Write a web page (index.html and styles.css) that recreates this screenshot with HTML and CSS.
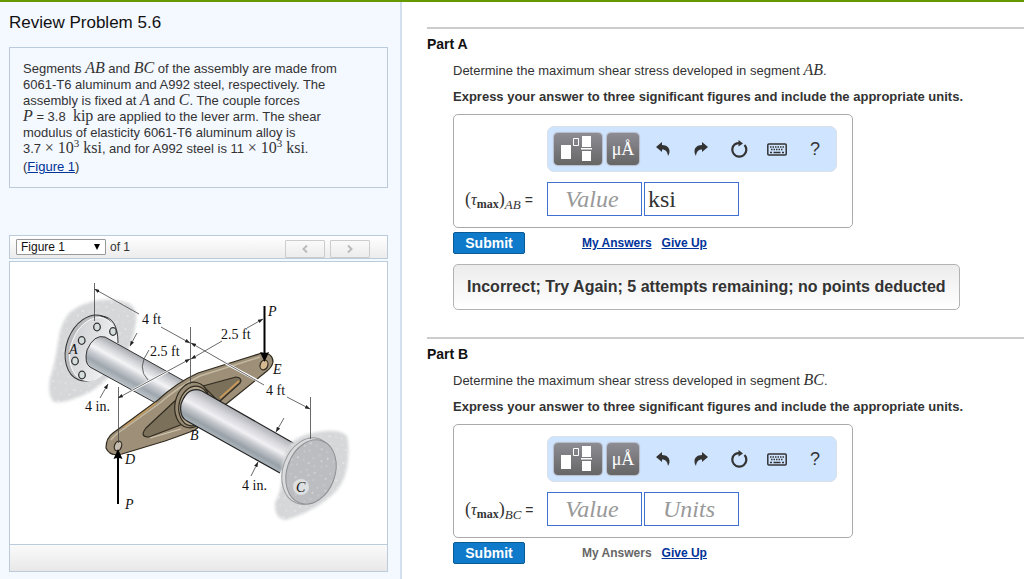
FILE: index.html
```html
<!DOCTYPE html>
<html lang="en">
<head>
<meta charset="utf-8">
<title>Review Problem 5.6</title>
<link rel="stylesheet" href="styles.css">
</head>
<body>
<svg class="defs" aria-hidden="true">
  <symbol id="i-template" viewBox="0 0 48 32">
    <path fill="#fff" d="M7 12h10v14H7zM28 3h9v11h-9zM28 18h9v10h-9zM27 15h11v1.500H27z"/>
    <path fill="none" stroke="#fff" d="M19.500 5.500h5v7h-5z"/>
  </symbol>
  <symbol id="i-undo" viewBox="0 0 14 14"><path d="M0 5 6 0v3c5 0 7.500 3 7.500 6 0 2-.5 3.500-1.500 5C11.500 10 10 7.500 6 7.500V10z"/></symbol>
  <symbol id="i-redo" viewBox="0 0 14 14"><path d="M14 5 8 0v3C3 3 .5 6 .5 9c0 2 .5 3.500 1.500 5C2.500 10 4 7.500 8 7.500V10z"/></symbol>
  <symbol id="i-reset" viewBox="0 0 18 18"><path fill="none" stroke="currentColor" stroke-width="2.200" d="M14.500 5A7 7 0 1 1 5 4.200Q7 3 10 3.200"/><path d="M8.500 0 13 3.500 8.500 6.500z"/></symbol>
  <symbol id="i-keyboard" viewBox="0 0 20 13"><rect x=".8" y="1" width="18.400" height="11" rx="1" fill="none" stroke="currentColor" stroke-width="1.500"/><path fill="none" stroke="currentColor" stroke-width="1.500" stroke-dasharray="1.500 1" d="M3 4h14M4 6.500h12"/><path fill="none" stroke="currentColor" stroke-width="1.500" d="M3 9.500h2M6.500 9.500h7M15 9.500h2"/></symbol>
</svg>
<div class="page">
  <aside class="side">
    <h1 class="title">Review Problem 5.6</h1>
    <div class="problem">
      Segments <i class="m">AB</i> and <i class="m">BC</i> of the assembly are made from 6061-T6 aluminum and A992 steel, respectively. The assembly is fixed at <i class="m">A</i> and <i class="m">C</i>. The couple forces <span class="keep"><i class="m">P</i> = 3.8 &nbsp;<span class="m">kip</span></span> are applied to the lever arm. The shear modulus of elasticity 6061-T6 aluminum alloy is <span class="keep">3.7 <span class="m">× 10<sup>3</sup> ksi</span></span>, and for A992 steel is <span class="keep">11 <span class="m">× 10<sup>3</sup> ksi</span></span>.
      <div class="ref">(<a href="#figure">Figure 1</a>)</div>
    </div>
    <div class="figbar">
      <span class="pick"><select class="figsel" aria-label="Figure"><option>Figure 1</option></select><svg class="caret" width="6" height="6" viewBox="0 0 6 6" aria-hidden="true"><path d="M0 0h6L3 6z"/></svg></span>
      <span class="of">of 1</span>
      <button class="nav" disabled aria-label="Previous figure"><svg width="6" height="8" viewBox="0 0 6 8"><path d="M5 0.500 1.500 4 5 7.500"/></svg></button>
      <button class="nav" disabled aria-label="Next figure"><svg width="6" height="8" viewBox="0 0 6 8"><path d="M1 0.500 4.500 4 1 7.500"/></svg></button>
    </div>
    <figure class="figure" id="figure">
      <svg class="drawing" viewBox="10 262 377 282" role="img" aria-label="Shaft ABC with a lever arm DE">
        <defs>
          <linearGradient id="tubeL" gradientUnits="userSpaceOnUse" x1="134" y1="353" x2="118" y2="382">
            <stop offset="0" stop-color="#a5a8ad"/><stop offset=".2" stop-color="#cfd1d5"/><stop offset=".42" stop-color="#f4f4f6"/><stop offset=".58" stop-color="#cbced3"/><stop offset=".8" stop-color="#9fa7ae"/><stop offset="1" stop-color="#bcc3c9"/>
          </linearGradient>
          <linearGradient id="tubeR" gradientUnits="userSpaceOnUse" x1="250" y1="420" x2="234" y2="449">
            <stop offset="0" stop-color="#b4b6bb"/><stop offset=".2" stop-color="#d6d6db"/><stop offset=".42" stop-color="#f1f0f3"/><stop offset=".58" stop-color="#c6c9ce"/><stop offset=".8" stop-color="#98a1a8"/><stop offset="1" stop-color="#b4bcc2"/>
          </linearGradient>
          <linearGradient id="disc" x1="0" y1="0" x2="1" y2="0"><stop offset="0" stop-color="#d0d2d5"/><stop offset="1" stop-color="#f3f4f5"/></linearGradient>
          <pattern id="specks" width="23" height="19" patternUnits="userSpaceOnUse" patternTransform="rotate(23)">
            <g fill="#fff" opacity=".75"><circle cx="3" cy="4" r=".7"/><circle cx="9" cy="2" r=".5"/><circle cx="14" cy="7" r=".8"/><circle cx="20" cy="5" r=".5"/><circle cx="6" cy="10" r=".5"/><circle cx="11" cy="13" r=".7"/><circle cx="18" cy="13" r=".6"/><circle cx="3" cy="16" r=".6"/><circle cx="15" cy="17" r=".5"/></g>
          </pattern>
          <filter id="soft"><feGaussianBlur stdDeviation="1.500"/></filter>
          <marker id="ar" viewBox="0 0 8 6" refX="8" refY="3" markerWidth="5" markerHeight="4" markerUnits="userSpaceOnUse" orient="auto-start-reverse"><path d="M0 0 8 3 0 6z" fill="#222"/></marker>
        </defs>
        <path filter="url(#soft)" fill="#d6d7d9" d="M69 313Q80 304 94 301Q112 297 128 303Q138 308 136 322Q133 345 122 360Q110 380 90 392Q66 404 54 402Q47 396 50 378Q55 364 58 342Q60 324 69 313z"/>
        <path fill="url(#specks)" d="M69 313Q80 304 94 301Q112 297 128 303Q138 308 136 322Q133 345 122 360Q110 380 90 392Q66 404 54 402Q47 396 50 378Q55 364 58 342Q60 324 69 313z"/>
        <g stroke="#333" stroke-width="1">
          <ellipse cx="90.500" cy="348" rx="24" ry="34" transform="rotate(20 90.500 348)" fill="#b9bbbf"/>
          <ellipse cx="93.500" cy="349" rx="22.500" ry="32.500" transform="rotate(20 93.500 349)" fill="url(#disc)" stroke="#f7f7f7"/>
          <path fill="none" d="M101 316Q118 317 118 343"/>
          <g fill="#d5dedd" stroke-width="1.300"><ellipse cx="97" cy="327" rx="3.300" ry="3.800"/><ellipse cx="113" cy="331.500" rx="3.300" ry="3.800"/><ellipse cx="81.700" cy="340.500" rx="3.300" ry="3.800"/><ellipse cx="75" cy="361" rx="3.300" ry="3.800"/><ellipse cx="82" cy="375" rx="3.300" ry="3.800"/></g>
          <path fill="url(#tubeL)" d="M105 337Q94 334 87 350Q84 363 90 367L172 412 202 391z"/>
        </g>
        <g stroke="#312b20" stroke-width="1.200" stroke-linejoin="round">
          <path fill="#9d8f78" d="M113 433L158 400Q176 383 198 373L262 353Q273 353 273 362Q272 367 267 371L225 405 195 430Q185 434 165 441L122 454Q110 457 106 448Q106 438 113 433z"/>
          <path fill="none" stroke="#c4b9a2" stroke-width="1.500" d="M111 440Q114 436 118 433L160 403Q178 387 200 376L260 357"/>
          <path fill="none" stroke="#c79a5c" stroke-width="1.500" d="M124 427L156 403"/>
          <path fill="#7b7059" d="M146 428L177 399 183 424 149 437Q139 437 146 428z"/>
          <path fill="none" stroke="#d3c8b1" d="M150 438L181 429"/>
          <path fill="#7b7059" d="M203 386L236 377Q243 378 240 383L219 402z"/>
          <path fill="none" stroke="#c79a5c" stroke-width="1.800" d="M239 381L220 398"/>
          <ellipse cx="192" cy="405" rx="17" ry="23" transform="rotate(12 192 405)" fill="#978a73"/>
          <ellipse cx="194" cy="406" rx="15" ry="20" transform="rotate(12 194 406)" fill="#b1a48c"/>
          <ellipse cx="118" cy="446" rx="3.500" ry="5" transform="rotate(20 118 446)" fill="#c5beb0"/>
          <ellipse cx="264" cy="365" rx="3.800" ry="5" transform="rotate(20 264 365)" fill="#d4b991"/>
        </g>
        <path fill="url(#tubeR)" d="M202 391Q188 385 181 404Q179 418 187 421L280 473 295 444z"/>
        <path fill="none" stroke="#222" stroke-width="1.200" d="M295 444L202 391Q188 385 181 404Q179 417 187 421L280 473"/>
        <path filter="url(#soft)" fill="#d6d7d9" d="M292 442Q303 433 325 431Q341 430 347 436Q350 448 347 468Q343 487 330 497Q312 512 286 520Q274 519 275 503Q282 490 282 474Q282 454 292 442z"/>
        <path fill="url(#specks)" d="M292 442Q303 433 325 431Q341 430 347 436Q350 448 347 468Q343 487 330 497Q312 512 286 520Q274 519 275 503Q282 490 282 474Q282 454 292 442z"/>
        <ellipse cx="308" cy="471" rx="25" ry="34" transform="rotate(20 308 471)" fill="#dadbdd" stroke="#999b9e"/>
        <ellipse cx="311" cy="472" rx="24" ry="33" transform="rotate(20 311 472)" fill="#bcbdc0" stroke="#8e9093"/>
        <ellipse cx="311" cy="472" rx="23" ry="32" transform="rotate(20 311 472)" fill="url(#specks)"/>
        <circle cx="301" cy="487" r="8" fill="#dedfe0"/>
        <g fill="none" stroke="#fff" stroke-width="2.500"><path d="M214 357L262 383M122 396L183 363"/></g>
        <g fill="none" stroke="#444" stroke-width=".8">
          <path d="M94.500 283V321M190.500 327V384M118.500 387V443M310.500 397V439"/>
          <path marker-start="url(#ar)" d="M94.500 289L139 314"/>
          <path marker-end="url(#ar)" d="M161 327L190 343"/>
          <path marker-start="url(#ar)" d="M191 343L264 385"/>
          <path marker-end="url(#ar)" d="M287 397L310 409"/>
          <path marker-start="url(#ar)" d="M191 359L222 341"/>
          <path marker-end="url(#ar)" d="M247 328L263 319"/>
          <path marker-start="url(#ar)" marker-end="url(#ar)" d="M190 359L118 398"/>
          <path d="M149 350Q136 368 148 380"/>
          <path marker-end="url(#ar)" d="M137 333L130 346"/>
          <path marker-end="url(#ar)" d="M100 398L108 384"/>
          <path marker-end="url(#ar)" d="M284 418L276 432"/>
          <path marker-end="url(#ar)" d="M251 476L258 462"/>
        </g>
        <path stroke="#000" stroke-width="2" d="M264.500 306V354M118 504V458"/>
        <path d="M260 352l4.500 10 4.500-10q-4.500 2-9 0zM113.500 459l4.500-10 4.500 10q-4.500-2-9 0z"/>
        <g class="lbl">
          <text x="142" y="324">4 ft</text><text x="150" y="356">2.5 ft</text><text x="221" y="339">2.5 ft</text><text x="266" y="395">4 ft</text><text x="85" y="411">4 in.</text><text x="242" y="490">4 in.</text>
          <g font-style="italic"><text x="69" y="354">A</text><text x="190" y="440">B</text><text x="296" y="492">C</text><text x="125" y="464">D</text><text x="273" y="374">E</text><text x="268" y="316">P</text><text x="125" y="509">P</text></g>
        </g>
      </svg>
      <div class="figfoot"></div>
    </figure>
  </aside>
  <main class="main">
    <section class="part">
      <h2 class="part-title">Part A</h2>
      <div class="part-body">
        <p class="ask">Determine the maximum shear stress developed in segment <i class="m">AB</i>.</p>
        <p class="how">Express your answer to three significant figures and include the appropriate units.</p>
        <div class="answer">
          <div class="tools">
            <button class="dark wide" aria-label="Templates"><svg width="48" height="32"><use href="#i-template"/></svg></button>
            <button class="dark mu" aria-label="Symbols">μÅ</button>
            <span class="toolset">
              <button class="tool" aria-label="Undo"><svg width="14" height="14"><use href="#i-undo"/></svg></button>
              <button class="tool" aria-label="Redo"><svg width="14" height="14"><use href="#i-redo"/></svg></button>
              <button class="tool" aria-label="Reset"><svg width="18" height="18"><use href="#i-reset"/></svg></button>
              <button class="tool" aria-label="Keyboard"><svg width="20" height="13"><use href="#i-keyboard"/></svg></button>
              <button class="tool" aria-label="Help">?</button>
            </span>
          </div>
          <div class="entry">
            <label class="lhs" for="va"><span class="paren">(</span><i>τ</i><sub>max</sub><span class="paren">)</span><sub class="seg">AB</sub><span class="eq">=</span></label>
            <input class="field" id="va" placeholder="Value">
            <input class="field" aria-label="Units" placeholder="Units" value="ksi">
          </div>
        </div>
        <div class="actions"><button class="submit">Submit</button><a class="first" href="#answers">My Answers</a><a href="#giveup">Give Up</a></div>
        <div class="feedback">Incorrect; Try Again; 5 attempts remaining; no points deducted</div>
      </div>
    </section>
    <section class="part">
      <h2 class="part-title">Part B</h2>
      <div class="part-body">
        <p class="ask">Determine the maximum shear stress developed in segment <i class="m">BC</i>.</p>
        <p class="how">Express your answer to three significant figures and include the appropriate units.</p>
        <div class="answer">
          <div class="tools">
            <button class="dark wide" aria-label="Templates"><svg width="48" height="32"><use href="#i-template"/></svg></button>
            <button class="dark mu" aria-label="Symbols">μÅ</button>
            <span class="toolset">
              <button class="tool" aria-label="Undo"><svg width="14" height="14"><use href="#i-undo"/></svg></button>
              <button class="tool" aria-label="Redo"><svg width="14" height="14"><use href="#i-redo"/></svg></button>
              <button class="tool" aria-label="Reset"><svg width="18" height="18"><use href="#i-reset"/></svg></button>
              <button class="tool" aria-label="Keyboard"><svg width="20" height="13"><use href="#i-keyboard"/></svg></button>
              <button class="tool" aria-label="Help">?</button>
            </span>
          </div>
          <div class="entry">
            <label class="lhs" for="vb"><span class="paren">(</span><i>τ</i><sub>max</sub><span class="paren">)</span><sub class="seg">BC</sub><span class="eq">=</span></label>
            <input class="field" id="vb" placeholder="Value">
            <input class="field" aria-label="Units" placeholder="Units">
          </div>
        </div>
        <div class="actions"><button class="submit">Submit</button><span class="first">My Answers</span><a href="#giveup">Give Up</a></div>
      </div>
    </section>
  </main>
</div>
</body>
</html>
```
FILE: styles.css
```css
* { box-sizing: border-box; }
body { margin: 0; font: 13px/16px "Liberation Sans", Arial, sans-serif; color: #333; background: #fff; }
button, input, select { font: inherit; color: inherit; margin: 0; }
button { padding: 0; border: 0; background: none; }
.defs { display: block; width: 0; height: 0; }
.page { display: grid; grid-template-columns: 402px minmax(0, 1fr); min-height: 100vh; border-top: 2px solid #690; }

.side { background: #f4f8ff; border-right: 2px solid #d3dfee; padding: 11px 12px 7px 9px; }
.title { margin: 0 0 14px; font-size: 17px; font-weight: 400; line-height: 20px; color: #111; }
.problem { border: 1px solid #bccbdc; padding: 13px 30px 11px 13px; }
.problem a, .actions a { color: #039; text-decoration: underline; }
.m { font-family: "Liberation Serif", "Times New Roman", serif; font-size: 16px; line-height: 0; }
.m sup { font-size: 11px; line-height: 0; vertical-align: 6px; }
.keep { white-space: nowrap; }
.ref { padding: 2px 0 1px; }

.figbar { display: flex; align-items: center; height: 24px; margin-top: 47px; padding: 0 17px 0 6px; border: 1px solid #bccbdc; background: linear-gradient(#fff, #ececec); }
.pick { display: grid; align-items: center; width: 90px; }
.pick > * { grid-area: 1 / 1; }
.figsel { appearance: none; width: 100%; height: 16px; padding: 0 4px; border: 1px solid #999; border-radius: 1px; background: #fff; font-size: 12px; line-height: 14px; color: #111; }
.caret { justify-self: end; margin-right: 6px; pointer-events: none; }
.of { font-size: 12px; margin-left: 4px; margin-right: auto; }
.nav { width: 40px; height: 18px; margin-left: 5px; margin-top: 3px; border: 1px solid #ccc; border-radius: 1px; background: linear-gradient(#fafafa, #ececec); display: flex; align-items: center; justify-content: center; }
.nav svg { fill: none; stroke: #bbb; stroke-width: 2; }
.figure { margin: 2px 0 0; border: 1px solid #bccbdc; background: #fff; }
.drawing { display: block; width: 100%; }
.lbl { font: 14px "Liberation Serif", "Times New Roman", serif; fill: #111; }
.figfoot { height: 27px; border-top: 1px solid #bccbdc; background: linear-gradient(#fafafa, #e8e8e8); }

.main { padding: 25px 0 0 25px; }
.part { border-top: 2px solid #ccc; margin-bottom: 27px; }
.part-title { margin: 7px 0 11px; font-size: 14px; line-height: 16px; color: #111; }
.part-body { padding-left: 26px; }
.ask { margin: 0 0 10px; }
.how { margin: 0 0 9px; font-weight: 700; }
.answer { max-width: 400px; border: 1px solid #aaa; border-radius: 5px; padding: 11px 15px 11px 9px; }
.tools { display: flex; align-items: center; gap: 5px; height: 46px; margin-left: 84px; padding: 0 2px 0 6px; border: 1px solid #d9e0e8; border-radius: 7px; background: #cfe4fe; }
.dark { height: 32px; border-radius: 4px; background: linear-gradient(#8d8c94, #666); box-shadow: 0 0 1px 1px #b6bcc6; color: #fff; flex: none; }
.wide { width: 48px; }
.dark svg { display: block; }
.mu { width: 32px; font: 18px/32px "Liberation Serif", "Times New Roman", serif; }
.toolset { display: flex; flex: 1; }
.tool { flex: 1; height: 32px; display: flex; align-items: center; justify-content: center; color: #333; font-size: 18px; }
.tool svg { fill: currentColor; }
.entry { display: flex; align-items: center; gap: 2px; margin-top: 10px; }
.lhs { width: 82px; padding-left: 2px; white-space: nowrap; font: 16px/24px "Liberation Serif", "Times New Roman", serif; }
.lhs sub { font-size: 12px; font-weight: 700; line-height: 0; vertical-align: -3px; }
.lhs .seg { font-style: italic; font-weight: 400; font-size: 13px; vertical-align: -4px; }
.paren { font-size: 18px; }
.eq { margin-left: 4px; font: 14px "Liberation Sans", Arial, sans-serif; }
.field { width: 95px; height: 34px; padding: 0 8px 0 3px; border: 1px solid #4070d0; border-radius: 0; background: #fff; font: 24px "Liberation Serif", "Times New Roman", serif; }
.field::placeholder { color: #999; font-style: italic; text-align: center; opacity: 1; }
.actions { display: flex; align-items: center; margin-top: 4px; font-size: 12px; font-weight: 700; color: #666; }
.submit { width: 72px; height: 22px; border: 1px solid #0a5a96; border-radius: 2px; background: #0f79ca; color: #fff; font-size: 14px; font-weight: 700; }
.first { margin: 0 10px 0 57px; }
.feedback { width: fit-content; margin-top: 10px; padding: 14px 13px; border: 1px solid #b3b3b3; border-radius: 5px; background: linear-gradient(#ececec, #fff); font-size: 16px; font-weight: 700; }
```
